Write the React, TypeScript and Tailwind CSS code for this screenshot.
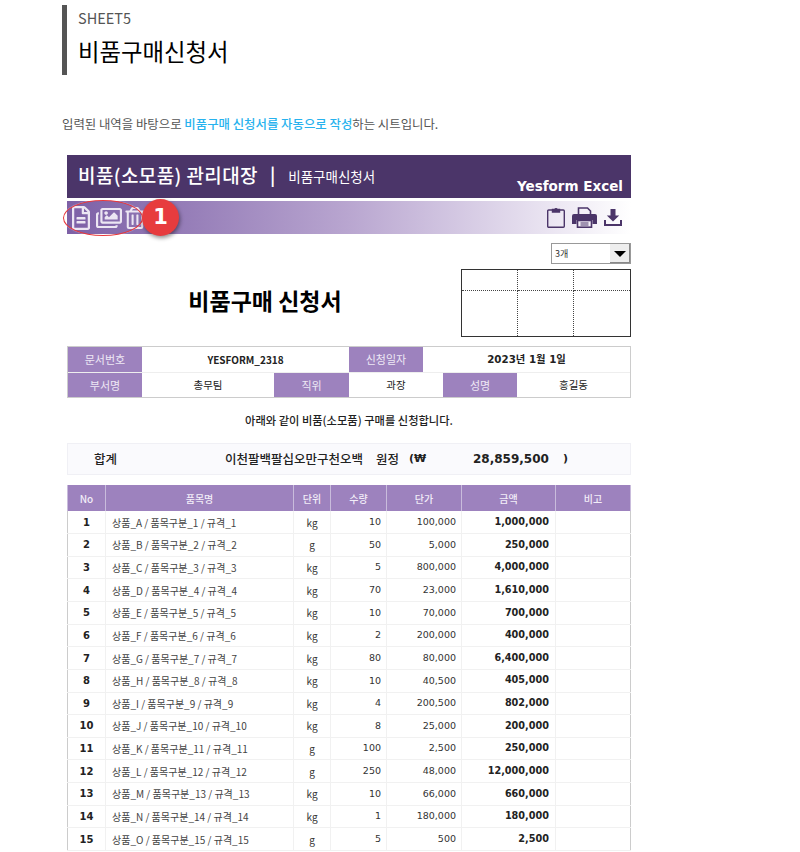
import { FaRegFileAlt, FaRegImages, FaRegTrashAlt } from "react-icons/fa";

const rows = [
  ["1", "상품_A / 품목구분_1 / 규격_1", "kg", "10", "100,000", "1,000,000"],
  ["2", "상품_B / 품목구분_2 / 규격_2", "g", "50", "5,000", "250,000"],
  ["3", "상품_C / 품목구분_3 / 규격_3", "kg", "5", "800,000", "4,000,000"],
  ["4", "상품_D / 품목구분_4 / 규격_4", "kg", "70", "23,000", "1,610,000"],
  ["5", "상품_E / 품목구분_5 / 규격_5", "kg", "10", "70,000", "700,000"],
  ["6", "상품_F / 품목구분_6 / 규격_6", "kg", "2", "200,000", "400,000"],
  ["7", "상품_G / 품목구분_7 / 규격_7", "kg", "80", "80,000", "6,400,000"],
  ["8", "상품_H / 품목구분_8 / 규격_8", "kg", "10", "40,500", "405,000"],
  ["9", "상품_I / 품목구분_9 / 규격_9", "kg", "4", "200,500", "802,000"],
  ["10", "상품_J / 품목구분_10 / 규격_10", "kg", "8", "25,000", "200,000"],
  ["11", "상품_K / 품목구분_11 / 규격_11", "g", "100", "2,500", "250,000"],
  ["12", "상품_L / 품목구분_12 / 규격_12", "g", "250", "48,000", "12,000,000"],
  ["13", "상품_M / 품목구분_13 / 규격_13", "kg", "10", "66,000", "660,000"],
  ["14", "상품_N / 품목구분_14 / 규격_14", "kg", "1", "180,000", "180,000"],
  ["15", "상품_O / 품목구분_15 / 규격_15", "g", "5", "500", "2,500"],
];

const sans = "font-['Noto_Sans_CJK_KR','Noto_Sans',sans-serif]";
const num = "font-['DejaVu_Sans','Noto_Sans_CJK_KR',sans-serif]";

const Label = ({ text, className = "" }: { text: string; className?: string }) => (
  <div className={`flex items-center justify-center bg-[#9d82be] text-[11px] text-[#eee8f5] ${className}`}>
    {text}
  </div>
);

const Value = ({ text, className = "" }: { text: string; className?: string }) => (
  <div className={`flex items-center justify-center text-[#222] ${className}`}>{text}</div>
);

const ClipboardIcon = () => (
  <svg width="18" height="21" viewBox="0 0 18 21" fill="none" stroke="#4b3569" strokeWidth="1.4">
    <rect x="0.7" y="3" width="16.6" height="17.300" rx="1" />
    <path d="M5.500 5V2.500h2.200a1.400 1.400 0 0 1 2.600 0h2.200V5z" fill="#4b3569" />
  </svg>
);

const PrintIcon = () => (
  <svg width="25" height="21" viewBox="0 0 25 21">
    <path d="M6.500 8V1h9l3 3v4" fill="#f4f0f8" stroke="#4b3569" strokeWidth="1.600" />
    <path d="M2 7h21a2 2 0 0 1 2 2v8h-4.500v-4h-16v4H0V9a2 2 0 0 1 2-2z" fill="#4b3569" />
    <rect x="5.500" y="13.500" width="14" height="6.700" fill="#f4f0f8" stroke="#4b3569" strokeWidth="1.600" />
    <path d="M8.500 16h8M8.500 18h8" stroke="#4b3569" strokeWidth="1" />
  </svg>
);

const DownloadIcon = () => (
  <svg width="18" height="17" viewBox="0 0 18 17" fill="#4b3569">
    <path d="M6.500 0h5v6.500h3.700L9 12.500 2.800 6.500h3.700z" />
    <path d="M0 11h2v4h14v-4h2v6H0z" />
  </svg>
);

const App = () => {
  return (
    <div className={`h-[852px] w-[800px] overflow-hidden bg-white ${sans}`}>
      <div className="ml-[62px] mt-[5px] flex h-[70px] flex-col border-l-[5px] border-[#555] pl-[11px]">
        <div className="mt-[3px] text-[14.500px] leading-[20px] text-[#555]">SHEET5</div>
        <h1 className="mt-[5px] text-[23.400px] leading-[36px] text-black">비품구매신청서</h1>
      </div>

      <p className="ml-[62px] mt-[39px] text-[12.400px] leading-[20px] text-[#555]">
        입력된 내역을 바탕으로 <span className="font-medium text-[#27b2ee]">비품구매 신청서를 자동으로 작성</span>하는 시트입니다.
      </p>

      <div className="relative ml-[67px] mt-[21px] w-[564px]">
        <div className="relative flex h-[43px] items-center bg-[#4b3569] pl-[11px] text-white">
          <span className="mb-[2px] text-[19px] font-medium tracking-[0.4px]">비품(소모품) 관리대장</span>
          <span className="mb-[4px] ml-[12px] text-[18px] font-bold">|</span>
          <span className="ml-[13px] text-[13.500px]">비품구매신청서</span>
          <span className={`absolute bottom-[4px] right-[8px] text-[13.500px] font-bold leading-[16px] ${num}`}>Yesform Excel</span>
        </div>

        <div className="mt-[3px] flex h-[33px] items-center justify-between bg-gradient-to-r from-[#7d60a6] via-[#b9a6d0] to-white pl-[2px] pr-[9px]">
          <div className="flex items-center gap-[3px] text-[#ece6f3]">
            <FaRegFileAlt size={24} />
            <FaRegImages size={26} />
            <FaRegTrashAlt size={22} className="-ml-[1px]" />
          </div>
          <div className="flex items-center gap-[7px]">
            <ClipboardIcon />
            <PrintIcon />
            <DownloadIcon />
          </div>
        </div>

        {/* red annotation over the toolbar */}
        <div className="absolute left-[-4px] top-[45px] h-[36px] w-[80px] rounded-[50%] border-[1.500px] border-[#e8383c] shadow-[0_0_1px_#ffffff]" />
        <div className={`absolute left-[75px] top-[44px] flex h-[37px] w-[37px] items-center justify-center rounded-full bg-[#e73c3e] text-[21px] font-bold text-white shadow-[1px_2px_4px_rgba(0,0,0,0.45)] ${num}`}>
          1
        </div>

        <div className="mt-[9px] flex justify-end">
          <div className="flex h-[21px] w-[80px] items-center justify-between border border-[#999] pl-[3px] text-[9px] text-[#333]">
            <span>3개</span>
            <div className="flex h-full w-[20px] items-center justify-center bg-[#eee] shadow-[inset_-1px_-1px_0_#888]">
              <div className="h-0 w-0 border-x-[6px] border-t-[6px] border-x-transparent border-t-black" />
            </div>
          </div>
        </div>

        <div className="mt-[5px] flex items-center justify-between">
          <div className="flex-1 pb-[6px] pl-[2px] text-center text-[23px] font-bold text-black">비품구매 신청서</div>
          <div className="grid h-[68px] w-[170px] grid-cols-3 grid-rows-[21px_1fr] border border-[#333]">
            <div className="border-b border-r border-dotted border-[#444]" />
            <div className="border-b border-r border-dotted border-[#444]" />
            <div className="border-b border-dotted border-[#444]" />
            <div className="border-r border-dotted border-[#444]" />
            <div className="border-r border-dotted border-[#444]" />
            <div />
          </div>
        </div>

        <div className="mt-[9px] border border-[#ccc] text-[10.500px]">
          <div className="flex h-[25px]">
            <Label text="문서번호" className="w-[74px]" />
            <Value text="YESFORM_2318" className="w-[207px] text-[10px] font-bold" />
            <Label text="신청일자" className="w-[74px]" />
            <Value text="2023년 1월 1일" className={`flex-1 text-[10.300px] font-bold ${num}`} />
          </div>
          <div className="flex h-[25px] border-t border-[#eee]">
            <Label text="부서명" className="w-[74px]" />
            <Value text="총무팀" className="w-[132px]" />
            <Label text="직위" className="w-[75px]" />
            <Value text="과장" className="w-[94px]" />
            <Label text="성명" className="w-[74px]" />
            <Value text="홍길동" className="flex-1" />
          </div>
        </div>

        <p className="mt-[12px] text-center text-[11.250px] font-medium leading-[20px] text-[#222]">
          아래와 같이 비품(소모품) 구매를 신청합니다.
        </p>

        <div className="mt-[13px] flex h-[32px] items-center whitespace-nowrap border border-[#f0f0f5] bg-[#fafafd] text-[12.500px] font-medium text-[#222]">
          <span className="ml-[26px] w-[131px]">합계</span>
          <span className="w-[139px]">이천팔백팔십오만구천오백</span>
          <span className="ml-[12px] w-[24px]">원정</span>
          <span className={`ml-[9px] w-[64px] text-[11px] font-bold ${num}`}>(₩</span>
          <span className={`w-[90px] text-[12px] font-bold ${num}`}>28,859,500</span>
          <span className={`text-[11px] font-bold ${num}`}>)</span>
        </div>

        <table className="mt-[10px] w-[564px] table-fixed border-collapse border-x border-[#ccc] text-[10px] text-[#333]">
          <colgroup>
            <col className="w-[38px]" />
            <col className="w-[188px]" />
            <col className="w-[37px]" />
            <col className="w-[56px]" />
            <col className="w-[75px]" />
            <col className="w-[94px]" />
            <col />
          </colgroup>
          <thead>
            <tr className="h-[26px] bg-[#9d82be] text-[#f2edf8]">
              {["No", "품목명", "단위", "수량", "단가", "금액", "비고"].map((head) => (
                <th key={head} className="border-x border-[#c9bcdc] font-medium">
                  {head}
                </th>
              ))}
            </tr>
          </thead>
          <tbody>
            {rows.map((row) => (
              <tr key={row[0]} className="h-[22.640px] border-b border-[#f1f1f1]">
                <td className={`border-r border-[#f1f1f1] text-center text-[10px] font-bold text-[#222] ${num}`}>{row[0]}</td>
                <td className="border-r border-[#f1f1f1] pl-[6px] text-[#444]">{row[1]}</td>
                <td className="border-r border-[#f1f1f1] text-center">{row[2]}</td>
                <td className={`border-r border-[#f1f1f1] pr-[5px] text-right text-[9.500px] ${num}`}>{row[3]}</td>
                <td className={`border-r border-[#f1f1f1] pr-[5px] text-right text-[9.500px] ${num}`}>{row[4]}</td>
                <td className={`border-r border-[#f1f1f1] pr-[6px] text-right text-[9.700px] font-bold text-[#222] ${num}`}>{row[5]}</td>
                <td />
              </tr>
            ))}
          </tbody>
        </table>
      </div>
    </div>
  );
};

export default App;
